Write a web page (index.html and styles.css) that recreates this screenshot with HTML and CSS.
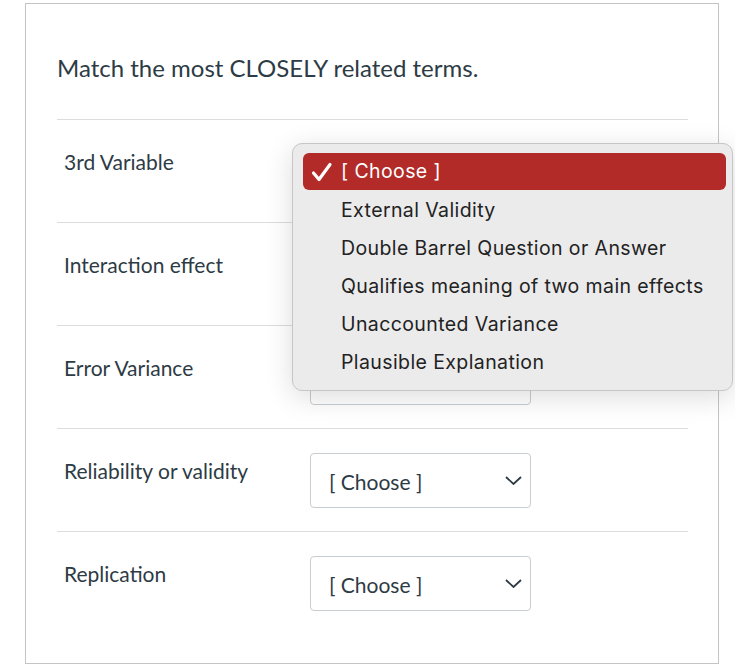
FILE: index.html
```html
<!DOCTYPE html>
<html lang="en">
<head>
    <meta charset="UTF-8" />
    <title>Matching Question</title>
    <link rel="stylesheet" href="styles.css">
</head>
<body>
    <div class="question">
        <p class="prompt">Match the most CLOSELY related terms.</p>

        <div class="answers">
            <div class="answer">
                <div class="term">3rd Variable</div>
                <div class="select-wrap">
                    <div class="select">
                        <span>[ Choose ]</span>
                        <svg class="chevron" width="17" height="9" viewBox="0 0 17 9"><path d="M1 1 L8.5 8 L16 1" fill="none" stroke="#2d3b45" stroke-width="1.8"/></svg>
                    </div>

                    <!-- open native menu -->
                    <div class="menu">
                        <div class="menu-item selected">
                            <svg class="check" width="22" height="20" viewBox="0 0 22 20"><path d="M2.5 11 L8 17.5 L19 2.5" fill="none" stroke="#fff" stroke-width="3.2" stroke-linecap="round" stroke-linejoin="round"/></svg>
                            [ Choose ]
                        </div>
                        <div class="menu-item">External Validity</div>
                        <div class="menu-item">Double Barrel Question or Answer</div>
                        <div class="menu-item">Qualifies meaning of two main effects</div>
                        <div class="menu-item">Unaccounted Variance</div>
                        <div class="menu-item">Plausible Explanation</div>
                    </div>
                </div>
            </div>

            <div class="answer">
                <div class="term">Interaction effect</div>
                <div class="select-wrap">
                    <div class="select">
                        <span>[ Choose ]</span>
                        <svg class="chevron" width="17" height="9" viewBox="0 0 17 9"><path d="M1 1 L8.5 8 L16 1" fill="none" stroke="#2d3b45" stroke-width="1.8"/></svg>
                    </div>
                </div>
            </div>

            <div class="answer">
                <div class="term">Error Variance</div>
                <div class="select-wrap">
                    <div class="select">
                        <span>[ Choose ]</span>
                        <svg class="chevron" width="17" height="9" viewBox="0 0 17 9"><path d="M1 1 L8.5 8 L16 1" fill="none" stroke="#2d3b45" stroke-width="1.8"/></svg>
                    </div>
                </div>
            </div>

            <div class="answer">
                <div class="term">Reliability or validity</div>
                <div class="select-wrap">
                    <div class="select">
                        <span>[ Choose ]</span>
                        <svg class="chevron" width="17" height="9" viewBox="0 0 17 9"><path d="M1 1 L8.5 8 L16 1" fill="none" stroke="#2d3b45" stroke-width="1.8"/></svg>
                    </div>
                </div>
            </div>

            <div class="answer">
                <div class="term">Replication</div>
                <div class="select-wrap">
                    <div class="select">
                        <span>[ Choose ]</span>
                        <svg class="chevron" width="17" height="9" viewBox="0 0 17 9"><path d="M1 1 L8.5 8 L16 1" fill="none" stroke="#2d3b45" stroke-width="1.8"/></svg>
                    </div>
                </div>
            </div>
        </div>
    </div>
</body>
</html>
```

FILE: styles.css
```css
html, body {
    margin: 0;
    padding: 0;
    background: #ffffff;
    overflow: hidden;
}

body {
    font-family: Lato, "Liberation Sans", sans-serif;
    color: #2d3b45;
}

.question {
    margin: 3px 0 0 25px;
    width: 631px;
    height: 659px;
    border: 1px solid #c4c4c4;
    padding: 0 30px 0 31px;
}

.prompt {
    margin: 0;
    padding-top: 47px;
    padding-bottom: 35px;
    font-size: 24px;
    line-height: 33px;
}

.answer {
    display: flex;
    align-items: flex-start;
    border-top: 1px solid #dcdcdc;
    padding: 24px 0 23px;
}

.term {
    width: 246px;
    padding: 3px 0 0 7px;
    font-size: 21px;
    line-height: 30px;
}

.select-wrap {
    position: relative;
}

.select {
    width: 193px;
    height: 53px;
    border: 1px solid #c7cdd1;
    border-radius: 4px;
    background: #fff;
    display: flex;
    align-items: center;
    justify-content: space-between;
    padding: 0 8px 0 18px;
    font-size: 21px;
}

.select span {
    padding-top: 1px;
}

.chevron {
    display: block;
}

.menu {
    position: absolute;
    left: -18px;
    top: -1px;
    width: 423px;
    padding: 9px 6px 9px 10px;
    background: #ebebeb;
    border: 1px solid #c6c6c6;
    border-radius: 10px;
    box-shadow: 0 6px 28px rgba(0, 0, 0, 0.14);
    font-family: Inter, "Open Sans", sans-serif;
    font-size: 19.5px;
    color: #222222;
    z-index: 2;
}

.menu-item {
    height: 38px;
    line-height: 38px;
    padding-left: 38px;
    position: relative;
    letter-spacing: 0.4px;
    white-space: nowrap;
}

.menu-item.selected {
    background: #b22b28;
    color: #ffffff;
    border-radius: 6px;
    height: 37px;
    line-height: 37px;
    margin-bottom: 1px;
}

.check {
    position: absolute;
    left: 8px;
    top: 9px;
}
```
